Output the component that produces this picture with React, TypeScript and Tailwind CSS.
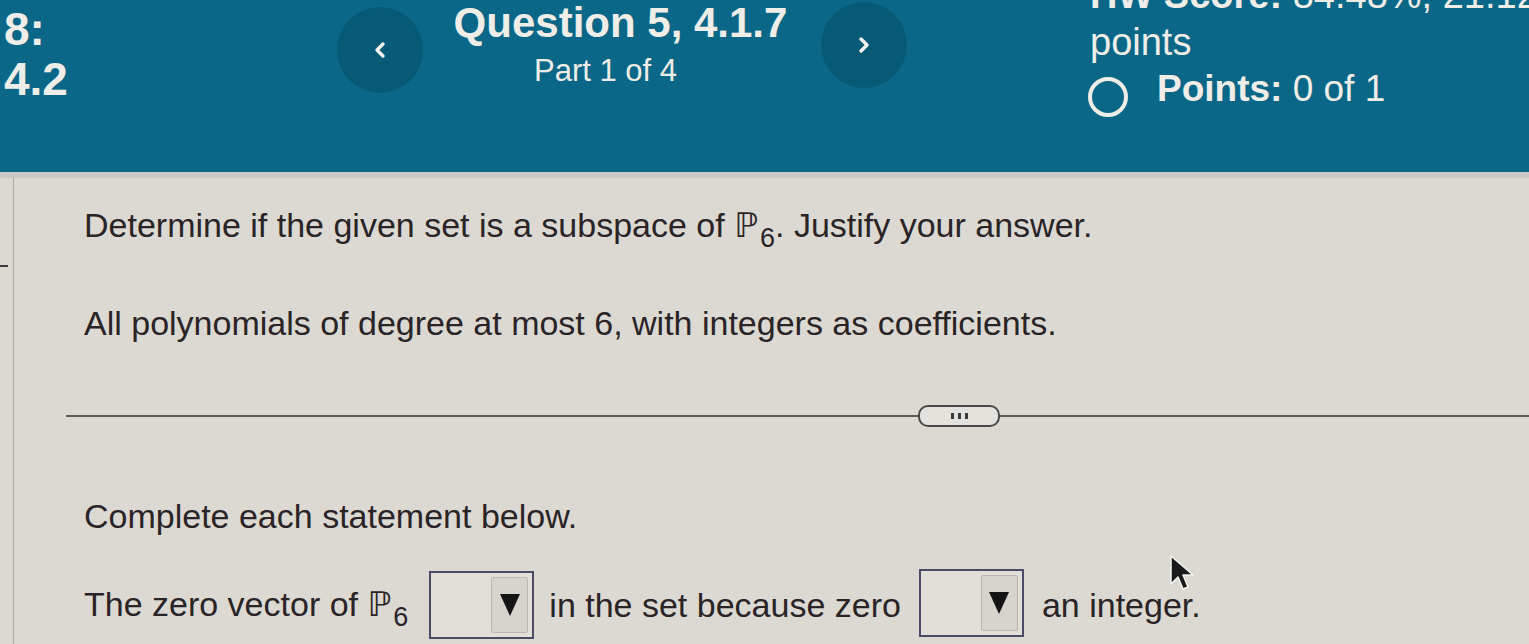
import type { ReactNode } from 'react'

function NavButton({ dir }: { dir: 'prev' | 'next' }) {
  return (
    <div className="flex size-[86px] shrink-0 items-center justify-center rounded-full bg-[#075a76]">
      <svg width="16" height="20" viewBox="0 0 16 20" fill="none">
        {dir === 'prev' ? (
          <path d="M11 4 L5 10 L11 16" stroke="#f2f2ee" strokeWidth="3.4" strokeLinecap="round" strokeLinejoin="round" />
        ) : (
          <path d="M5 4 L11 10 L5 16" stroke="#f2f2ee" strokeWidth="3.4" strokeLinecap="round" strokeLinejoin="round" />
        )}
      </svg>
    </div>
  )
}

function Dropdown() {
  return (
    <div className="flex h-[68px] w-[105px] shrink-0 items-stretch justify-end border-2 border-[#4b4a68] bg-[#e1dfd8] p-[4px]">
      <div className="flex w-[37px] items-center justify-center rounded-[2px] border border-[#b9b7b0] bg-[#d6d4cd]">
        <svg width="22" height="26" viewBox="0 0 22 26">
          <path d="M1 2 H21 L11 24 Z" fill="#141414" />
        </svg>
      </div>
    </div>
  )
}

function P6(): ReactNode {
  return (
    <span className="whitespace-nowrap">
      <span className="font-['DejaVu_Sans',sans-serif] font-normal">ℙ</span>
      <span className="relative top-[10px] ml-[2px] text-[27px]">6</span>
    </span>
  )
}

export default function App() {
  return (
    <div className="relative h-[644px] w-[1529px] overflow-hidden bg-[#dcd9d2] font-['Liberation_Sans',Arial,sans-serif]">
      {/* header bar */}
      <div className="flex h-[172px] bg-[#0a6787] text-[#efede7]">
        <div className="w-[337px] shrink-0 pl-[4px] pt-[4px] text-[46px] font-bold leading-[50px]">
          <div>8:</div>
          <div>4.2</div>
        </div>
        <div className="mt-[7px]">
          <NavButton dir="prev" />
        </div>
        <div className="ml-[31px] flex w-[333px] shrink-0 flex-col items-center">
          <div className="-mt-[2px] whitespace-nowrap text-[42px] font-bold leading-[50px]">Question 5, 4.1.7</div>
          <div className="-ml-[30px] mt-[6px] whitespace-nowrap text-[31px] leading-[34px]">Part 1 of 4</div>
        </div>
        <div className="ml-[34px] mt-[2px]">
          <NavButton dir="next" />
        </div>
        <div className="ml-[183px] flex flex-col">
          <div className="-mt-[27px] whitespace-nowrap text-[38px] leading-[44px]">
            <span className="font-bold">HW Score:</span> 84.48%, 21.12 of 25
          </div>
          <div className="mt-[3px] text-[38px] leading-[44px]">points</div>
          <div className="mt-[3px] flex items-start">
            <div className="-ml-[2px] mt-[10px] size-[40px] shrink-0 rounded-full border-[4px] border-[#efede7]" />
            <div className="ml-[29px] whitespace-nowrap text-[37px] leading-[44px]">
              <span className="font-bold">Points:</span> 0 of 1
            </div>
          </div>
        </div>
      </div>
      <div className="h-[6px] bg-[#c9c9c4]" />

      {/* content */}
      <div className="ml-[13px] h-[466px] border-l border-[#a9a8a3] text-[34px] leading-[40px] text-[#2a2427]">
        <div className="pl-[70px] pt-[27px]">
          Determine if the given set is a subspace of <P6 />. Justify your answer.
        </div>
        <div className="pl-[70px] pt-[55px]">All polynomials of degree at most 6, with integers as coefficients.</div>

        <div className="mt-[62px] flex items-center pl-[52px]">
          <div className="h-[2px] w-[852px] bg-[#5a5a5a]" />
          <div className="flex h-[22px] w-[82px] items-center justify-center gap-[4px] rounded-[10px] border-2 border-[#4a4a4a] bg-[#e4e2dc]">
            <span className="h-[6px] w-[3px] bg-[#3a3a3a]" />
            <span className="h-[6px] w-[3px] bg-[#3a3a3a]" />
            <span className="h-[6px] w-[3px] bg-[#3a3a3a]" />
          </div>
          <div className="h-[2px] flex-1 bg-[#5a5a5a]" />
        </div>

        <div className="pl-[70px] pt-[69px]">Complete each statement below.</div>

        <div className="mt-[35px] flex items-center pl-[70px]">
          <span className="whitespace-nowrap">
            The zero vector of <P6 />
          </span>
          <div className="ml-[21px]">
            <Dropdown />
          </div>
          <span className="ml-[15px] whitespace-nowrap">in the set because zero</span>
          <div className="-mt-[4px] ml-[18px]">
            <Dropdown />
          </div>
          <span className="ml-[18px] whitespace-nowrap">an integer.</span>
        </div>
      </div>

      {/* mouse pointer */}
      <svg className="absolute left-[1168px] top-[554px]" width="32" height="40" viewBox="0 0 32 40">
        <path d="M3 2 L3 30 L10 23 L15 35 L20 33 L15 21 L25 21 Z" fill="#1a1a1a" stroke="#f4f4f0" strokeWidth="1.5" strokeLinejoin="round" />
      </svg>
      {/* small tick on left edge */}
      <div className="absolute left-0 top-[265px] h-[2px] w-[8px] bg-[#3a3a3a]" />
    </div>
  )
}
